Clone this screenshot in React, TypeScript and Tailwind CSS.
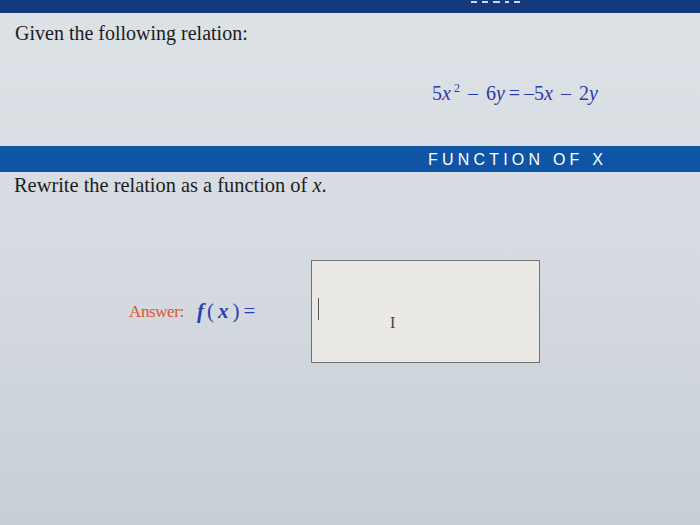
export default function App() {
  const serif = { fontFamily: '"Liberation Serif", "Times New Roman", serif' };
  return (
    <div
      className="w-[700px] h-[525px] overflow-hidden flex flex-col bg-gradient-to-b from-[#dde2e7] via-[#d5dbe0] to-[#c8cfd4]"
      style={serif}
    >
      <div className="h-[13px] bg-[#123a7c] flex justify-center gap-[5px] pl-[290px] pt-[1px]">
        <div className="w-[6px] h-[2px] bg-white/80" />
        <div className="w-[6px] h-[2px] bg-white/80" />
        <div className="w-[7px] h-[2px] bg-white/80" />
        <div className="w-[4px] h-[2px] bg-white/80" />
        <div className="w-[6px] h-[2px] bg-white/80" />
      </div>

      <div className="pl-[15px] pt-[8px] text-[20px] leading-[24px] text-[#1c1c1c]">
        Given the following relation:
      </div>

      <div className="pl-[432px] pt-[36px] h-[68px] text-[20px] text-[#2c3aa6] leading-[24px] whitespace-nowrap">
        5<i>x</i>
        <span className="inline-block text-[12px] leading-none align-top translate-y-[1px] pl-[3px]">2</span>
        <span className="px-[8px]">–</span>6<i>y</i>
        <span className="px-[4px]">=</span>–5<i>x</i>
        <span className="px-[8px]">–</span>2<i>y</i>
      </div>

      <div className="mt-[33px] h-[26px] bg-[#0f55a6] flex items-center pl-[428px]">
        <span className="text-white text-[16px] tracking-[4.2px] font-['Liberation_Sans',sans-serif] leading-none pt-[1px]">
          FUNCTION OF X
        </span>
      </div>

      <div className="pl-[14px] pt-[1px] text-[20.4px] leading-[24px] text-[#1c1c1c]">
        Rewrite the relation as a function of <i>x</i>.
      </div>

      <div className="flex items-center mt-[63px] pl-[129px]">
        <span className="text-[#e4502e] text-[17px] tracking-[-0.4px] w-[68px]">Answer:</span>
        <span className="flex items-baseline text-[#2d3cb0] text-[21px] w-[114px] whitespace-nowrap">
          <i className="font-bold">f</i>
          <span className="ml-[3px]">(</span>
          <i className="font-bold ml-[4px]">x</i>
          <span className="ml-[4px]">)</span>
          <span className="ml-[4px]">=</span>
        </span>
        <div className="relative w-[229px] h-[103px] bg-[#eae9e5] border border-[#6f7173]">
          <div className="absolute left-[6px] top-[37px] w-[1px] h-[22px] bg-[#555]" />
          <div className="absolute left-[78px] top-[54px] text-[16px] text-[#444] leading-none">I</div>
        </div>
      </div>
    </div>
  );
}
